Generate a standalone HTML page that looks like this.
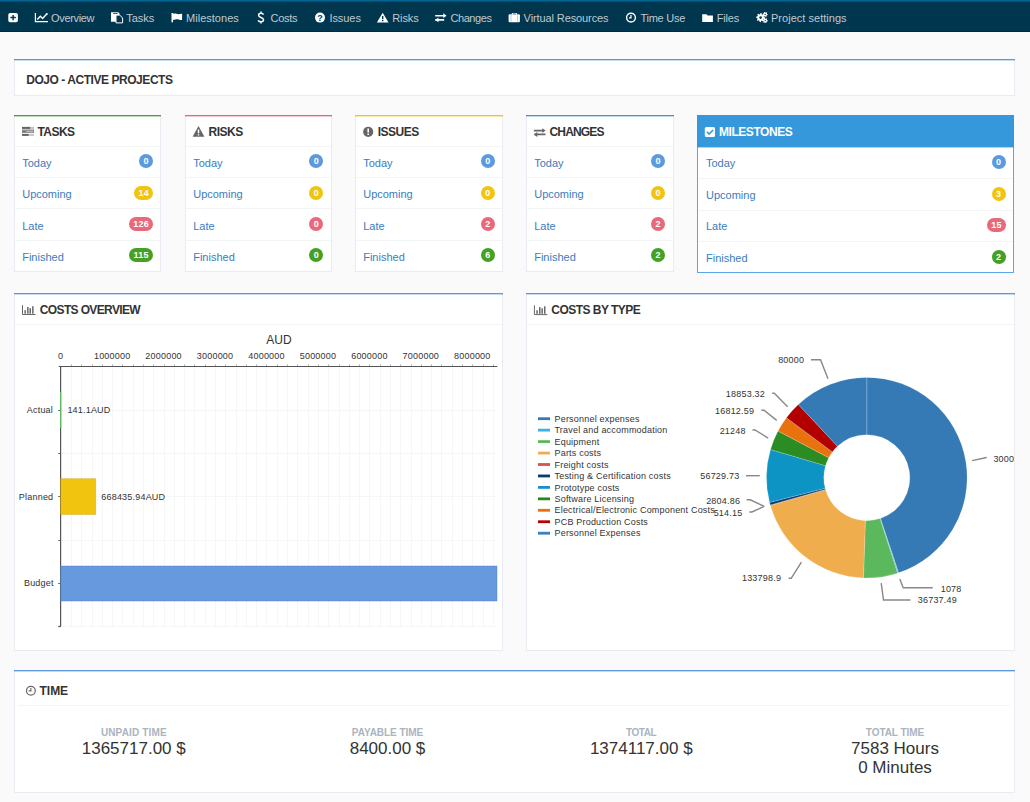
<!DOCTYPE html>
<html><head><meta charset="utf-8"><style>
html,body{margin:0;padding:0;}
body{width:1030px;height:802px;overflow:hidden;background:#fafafa;position:relative;font-family:"Liberation Sans",sans-serif;}
.t{position:absolute;white-space:pre;}
.c9{font-size:9px;fill:#333;letter-spacing:0.2px;}
svg text{font-family:"Liberation Sans",sans-serif;}
.badge{position:absolute;height:14px;border-radius:7px;color:#fff;font:bold 9px/14px "Liberation Sans",sans-serif;text-align:center;letter-spacing:0.3px;text-indent:0.3px;}
</style></head><body>
<div style="position:absolute;left:0px;top:0px;width:1030px;height:32px;background:#01364f"></div>
<div style="position:absolute;left:0px;top:0px;width:1030px;height:1px;background:#016596"></div>
<div style="position:absolute;left:0px;top:1px;width:1030px;height:1px;background:#024c70"></div>
<div style="position:absolute;left:0px;top:31px;width:1030px;height:1px;background:#022b3e"></div>
<div style="position:absolute;left:14px;top:59px;width:1001px;height:37px;background:#fff;box-sizing:border-box;border:1px solid #e8ecf2"></div>
<div style="position:absolute;left:14px;top:59px;width:1001px;height:1px;background:#5c96df"></div>
<div style="position:absolute;left:14px;top:60px;width:1001px;height:1px;background:#5c96df;opacity:0.35"></div>
<div style="position:absolute;left:14px;top:115px;width:147px;height:157px;background:#fff;box-sizing:border-box;border:1px solid #e8ecf2"></div>
<div style="position:absolute;left:14px;top:115px;width:147px;height:1px;background:#44a329"></div>
<div style="position:absolute;left:14px;top:116px;width:147px;height:1px;background:#44a329;opacity:0.35"></div>
<div style="position:absolute;left:15px;top:146px;width:145px;height:1px;background:#f3f4f5"></div>
<div style="position:absolute;left:15px;top:177.0px;width:145px;height:1px;background:#f3f4f5"></div>
<div style="position:absolute;left:15px;top:208.3px;width:145px;height:1px;background:#f3f4f5"></div>
<div style="position:absolute;left:15px;top:239.6px;width:145px;height:1px;background:#f3f4f5"></div>
<div class="badge" style="left:138.9px;top:154.4px;width:14px;background:#5b9ade">0</div>
<div class="badge" style="left:134.4px;top:185.7px;width:18.5px;background:#f1c40f">14</div>
<div class="badge" style="left:129.2px;top:217.0px;width:23.7px;background:#e8697a">126</div>
<div class="badge" style="left:129.2px;top:248.3px;width:23.7px;background:#45a125">115</div>
<div style="position:absolute;left:185px;top:115px;width:147px;height:157px;background:#fff;box-sizing:border-box;border:1px solid #e8ecf2"></div>
<div style="position:absolute;left:185px;top:115px;width:147px;height:1px;background:#e46672"></div>
<div style="position:absolute;left:185px;top:116px;width:147px;height:1px;background:#e46672;opacity:0.35"></div>
<div style="position:absolute;left:186px;top:146px;width:145px;height:1px;background:#f3f4f5"></div>
<div style="position:absolute;left:186px;top:177.0px;width:145px;height:1px;background:#f3f4f5"></div>
<div style="position:absolute;left:186px;top:208.3px;width:145px;height:1px;background:#f3f4f5"></div>
<div style="position:absolute;left:186px;top:239.6px;width:145px;height:1px;background:#f3f4f5"></div>
<div class="badge" style="left:309.3px;top:154.4px;width:14px;background:#5b9ade">0</div>
<div class="badge" style="left:309.3px;top:185.7px;width:14px;background:#f1c40f">0</div>
<div class="badge" style="left:309.3px;top:217.0px;width:14px;background:#e8697a">0</div>
<div class="badge" style="left:309.3px;top:248.3px;width:14px;background:#45a125">0</div>
<div style="position:absolute;left:355px;top:115px;width:148px;height:157px;background:#fff;box-sizing:border-box;border:1px solid #e8ecf2"></div>
<div style="position:absolute;left:355px;top:115px;width:148px;height:1px;background:#f1c40f"></div>
<div style="position:absolute;left:355px;top:116px;width:148px;height:1px;background:#f1c40f;opacity:0.35"></div>
<div style="position:absolute;left:356px;top:146px;width:146px;height:1px;background:#f3f4f5"></div>
<div style="position:absolute;left:356px;top:177.0px;width:146px;height:1px;background:#f3f4f5"></div>
<div style="position:absolute;left:356px;top:208.3px;width:146px;height:1px;background:#f3f4f5"></div>
<div style="position:absolute;left:356px;top:239.6px;width:146px;height:1px;background:#f3f4f5"></div>
<div class="badge" style="left:480.8px;top:154.4px;width:14px;background:#5b9ade">0</div>
<div class="badge" style="left:480.8px;top:185.7px;width:14px;background:#f1c40f">0</div>
<div class="badge" style="left:480.8px;top:217.0px;width:14px;background:#e8697a">2</div>
<div class="badge" style="left:480.8px;top:248.3px;width:14px;background:#45a125">6</div>
<div style="position:absolute;left:526px;top:115px;width:148px;height:157px;background:#fff;box-sizing:border-box;border:1px solid #e8ecf2"></div>
<div style="position:absolute;left:526px;top:115px;width:148px;height:1px;background:#4d8fdb"></div>
<div style="position:absolute;left:526px;top:116px;width:148px;height:1px;background:#4d8fdb;opacity:0.35"></div>
<div style="position:absolute;left:527px;top:146px;width:146px;height:1px;background:#f3f4f5"></div>
<div style="position:absolute;left:527px;top:177.0px;width:146px;height:1px;background:#f3f4f5"></div>
<div style="position:absolute;left:527px;top:208.3px;width:146px;height:1px;background:#f3f4f5"></div>
<div style="position:absolute;left:527px;top:239.6px;width:146px;height:1px;background:#f3f4f5"></div>
<div class="badge" style="left:651.0px;top:154.4px;width:14px;background:#5b9ade">0</div>
<div class="badge" style="left:651.0px;top:185.7px;width:14px;background:#f1c40f">0</div>
<div class="badge" style="left:651.0px;top:217.0px;width:14px;background:#e8697a">2</div>
<div class="badge" style="left:651.0px;top:248.3px;width:14px;background:#45a125">2</div>
<div style="position:absolute;left:697px;top:115px;width:317px;height:158px;background:#fff;box-sizing:border-box;border:1px solid #5aa6e6"></div>
<div style="position:absolute;left:697px;top:115px;width:317px;height:32px;background:#3498db"></div>
<div style="position:absolute;left:697px;top:147px;width:317px;height:1px;background:#3498db;opacity:0.4"></div>
<div style="position:absolute;left:698px;top:178.3px;width:315px;height:1px;background:#f3f4f5"></div>
<div style="position:absolute;left:698px;top:209.60000000000002px;width:315px;height:1px;background:#f3f4f5"></div>
<div style="position:absolute;left:698px;top:240.9px;width:315px;height:1px;background:#f3f4f5"></div>
<div class="badge" style="left:991.6px;top:155.3px;width:14px;background:#5b9ade">0</div>
<div class="badge" style="left:991.6px;top:186.7px;width:14px;background:#f1c40f">3</div>
<div class="badge" style="left:987.1px;top:218.1px;width:18.5px;background:#e8697a">15</div>
<div class="badge" style="left:991.6px;top:249.5px;width:14px;background:#45a125">2</div>
<div style="position:absolute;left:14px;top:293px;width:489px;height:358px;background:#fff;box-sizing:border-box;border:1px solid #e8ecf2"></div>
<div style="position:absolute;left:14px;top:293px;width:489px;height:1px;background:#5c96df"></div>
<div style="position:absolute;left:14px;top:294px;width:489px;height:1px;background:#5c96df;opacity:0.35"></div>
<div style="position:absolute;left:15px;top:324px;width:487px;height:1px;background:#f3f4f5"></div>
<div style="position:absolute;left:526px;top:293px;width:489px;height:358px;background:#fff;box-sizing:border-box;border:1px solid #e8ecf2"></div>
<div style="position:absolute;left:526px;top:293px;width:489px;height:1px;background:#5c96df"></div>
<div style="position:absolute;left:526px;top:294px;width:489px;height:1px;background:#5c96df;opacity:0.35"></div>
<div style="position:absolute;left:527px;top:324px;width:487px;height:1px;background:#f3f4f5"></div>
<div style="position:absolute;left:14px;top:670px;width:1001px;height:123px;background:#fff;box-sizing:border-box;border:1px solid #e8ecf2"></div>
<div style="position:absolute;left:14px;top:670px;width:1001px;height:1px;background:#5c96df"></div>
<div style="position:absolute;left:14px;top:671px;width:1001px;height:1px;background:#5c96df;opacity:0.35"></div>
<div style="position:absolute;left:18px;top:705px;width:992px;height:1px;background:#f3f4f5"></div>
<div class="t" style="left:51.00px;top:12.76px;font-size:11px;line-height:11px;font-weight:normal;color:#bfcad2;letter-spacing:-0.335px;">Overview</div>
<div class="t" style="left:126.30px;top:12.76px;font-size:11px;line-height:11px;font-weight:normal;color:#bfcad2;letter-spacing:-0.031px;">Tasks</div>
<div class="t" style="left:186.00px;top:12.76px;font-size:11px;line-height:11px;font-weight:normal;color:#bfcad2;letter-spacing:0.025px;">Milestones</div>
<div class="t" style="left:270.60px;top:12.76px;font-size:11px;line-height:11px;font-weight:normal;color:#bfcad2;letter-spacing:-0.281px;">Costs</div>
<div class="t" style="left:329.40px;top:12.76px;font-size:11px;line-height:11px;font-weight:normal;color:#bfcad2;letter-spacing:-0.059px;">Issues</div>
<div class="t" style="left:392.30px;top:12.76px;font-size:11px;line-height:11px;font-weight:normal;color:#bfcad2;letter-spacing:-0.123px;">Risks</div>
<div class="t" style="left:450.40px;top:12.76px;font-size:11px;line-height:11px;font-weight:normal;color:#bfcad2;letter-spacing:-0.408px;">Changes</div>
<div class="t" style="left:523.60px;top:12.76px;font-size:11px;line-height:11px;font-weight:normal;color:#bfcad2;letter-spacing:-0.102px;">Virtual Resources</div>
<div class="t" style="left:640.50px;top:12.76px;font-size:11px;line-height:11px;font-weight:normal;color:#bfcad2;letter-spacing:-0.265px;">Time Use</div>
<div class="t" style="left:716.70px;top:12.76px;font-size:11px;line-height:11px;font-weight:normal;color:#bfcad2;letter-spacing:-0.159px;">Files</div>
<div class="t" style="left:771.00px;top:12.76px;font-size:11px;line-height:11px;font-weight:normal;color:#bfcad2;letter-spacing:0.026px;">Project settings</div>
<div class="t" style="left:26.20px;top:74.03px;font-size:12px;line-height:12px;font-weight:bold;color:#333;letter-spacing:-0.450px;">DOJO - ACTIVE PROJECTS</div>
<div class="t" style="left:37.50px;top:126.03px;font-size:12px;line-height:12px;font-weight:bold;color:#333;letter-spacing:-0.570px;">TASKS</div>
<div class="t" style="left:22.20px;top:157.86px;font-size:11px;line-height:11px;font-weight:normal;color:#3a7cc0;letter-spacing:0.000px;">Today</div>
<div class="t" style="left:22.20px;top:188.86px;font-size:11px;line-height:11px;font-weight:normal;color:#3a7cc0;letter-spacing:0.000px;">Upcoming</div>
<div class="t" style="left:22.20px;top:220.76px;font-size:11px;line-height:11px;font-weight:normal;color:#3a7cc0;letter-spacing:0.000px;">Late</div>
<div class="t" style="left:22.20px;top:251.86px;font-size:11px;line-height:11px;font-weight:normal;color:#3a7cc0;letter-spacing:0.000px;">Finished</div>
<div class="t" style="left:208.50px;top:126.03px;font-size:12px;line-height:12px;font-weight:bold;color:#333;letter-spacing:-0.497px;">RISKS</div>
<div class="t" style="left:193.20px;top:157.86px;font-size:11px;line-height:11px;font-weight:normal;color:#3a7cc0;letter-spacing:0.000px;">Today</div>
<div class="t" style="left:193.20px;top:188.86px;font-size:11px;line-height:11px;font-weight:normal;color:#3a7cc0;letter-spacing:0.000px;">Upcoming</div>
<div class="t" style="left:193.20px;top:220.76px;font-size:11px;line-height:11px;font-weight:normal;color:#3a7cc0;letter-spacing:0.000px;">Late</div>
<div class="t" style="left:193.20px;top:251.86px;font-size:11px;line-height:11px;font-weight:normal;color:#3a7cc0;letter-spacing:0.000px;">Finished</div>
<div class="t" style="left:377.70px;top:126.03px;font-size:12px;line-height:12px;font-weight:bold;color:#333;letter-spacing:-0.503px;">ISSUES</div>
<div class="t" style="left:363.20px;top:157.86px;font-size:11px;line-height:11px;font-weight:normal;color:#3a7cc0;letter-spacing:0.000px;">Today</div>
<div class="t" style="left:363.20px;top:188.86px;font-size:11px;line-height:11px;font-weight:normal;color:#3a7cc0;letter-spacing:0.000px;">Upcoming</div>
<div class="t" style="left:363.20px;top:220.76px;font-size:11px;line-height:11px;font-weight:normal;color:#3a7cc0;letter-spacing:0.000px;">Late</div>
<div class="t" style="left:363.20px;top:251.86px;font-size:11px;line-height:11px;font-weight:normal;color:#3a7cc0;letter-spacing:0.000px;">Finished</div>
<div class="t" style="left:549.50px;top:126.03px;font-size:12px;line-height:12px;font-weight:bold;color:#333;letter-spacing:-0.836px;">CHANGES</div>
<div class="t" style="left:534.20px;top:157.86px;font-size:11px;line-height:11px;font-weight:normal;color:#3a7cc0;letter-spacing:0.000px;">Today</div>
<div class="t" style="left:534.20px;top:188.86px;font-size:11px;line-height:11px;font-weight:normal;color:#3a7cc0;letter-spacing:0.000px;">Upcoming</div>
<div class="t" style="left:534.20px;top:220.76px;font-size:11px;line-height:11px;font-weight:normal;color:#3a7cc0;letter-spacing:0.000px;">Late</div>
<div class="t" style="left:534.20px;top:251.86px;font-size:11px;line-height:11px;font-weight:normal;color:#3a7cc0;letter-spacing:0.000px;">Finished</div>
<div class="t" style="left:719.00px;top:126.23px;font-size:12px;line-height:12px;font-weight:bold;color:#fff;letter-spacing:-0.455px;">MILESTONES</div>
<div class="t" style="left:706.00px;top:158.46px;font-size:11px;line-height:11px;font-weight:normal;color:#3a7cc0;letter-spacing:0.000px;">Today</div>
<div class="t" style="left:706.00px;top:189.86px;font-size:11px;line-height:11px;font-weight:normal;color:#3a7cc0;letter-spacing:0.000px;">Upcoming</div>
<div class="t" style="left:706.00px;top:221.26px;font-size:11px;line-height:11px;font-weight:normal;color:#3a7cc0;letter-spacing:0.000px;">Late</div>
<div class="t" style="left:706.00px;top:252.66px;font-size:11px;line-height:11px;font-weight:normal;color:#3a7cc0;letter-spacing:0.000px;">Finished</div>
<div class="t" style="left:39.80px;top:303.83px;font-size:12px;line-height:12px;font-weight:bold;color:#333;letter-spacing:-0.634px;">COSTS OVERVIEW</div>
<div class="t" style="left:551.30px;top:303.83px;font-size:12px;line-height:12px;font-weight:bold;color:#333;letter-spacing:-0.526px;">COSTS BY TYPE</div>
<div class="t" style="left:39.60px;top:684.83px;font-size:12px;line-height:12px;font-weight:bold;color:#333;letter-spacing:-0.057px;">TIME</div>
<div class="t" style="left:100.90px;top:727.90px;font-size:10px;line-height:10px;font-weight:bold;color:#aab4bf;letter-spacing:0.143px;">UNPAID TIME</div>
<div class="t" style="left:81.75px;top:740.18px;font-size:17px;line-height:17px;font-weight:normal;color:#333;letter-spacing:0.000px;">1365717.00 $</div>
<div class="t" style="left:351.85px;top:727.90px;font-size:10px;line-height:10px;font-weight:bold;color:#aab4bf;letter-spacing:-0.052px;">PAYABLE TIME</div>
<div class="t" style="left:349.68px;top:740.18px;font-size:17px;line-height:17px;font-weight:normal;color:#333;letter-spacing:0.000px;">8400.00 $</div>
<div class="t" style="left:625.90px;top:727.90px;font-size:10px;line-height:10px;font-weight:bold;color:#aab4bf;letter-spacing:-0.427px;">TOTAL</div>
<div class="t" style="left:589.88px;top:740.18px;font-size:17px;line-height:17px;font-weight:normal;color:#333;letter-spacing:0.000px;">1374117.00 $</div>
<div class="t" style="left:865.85px;top:727.90px;font-size:10px;line-height:10px;font-weight:bold;color:#aab4bf;letter-spacing:-0.066px;">TOTAL TIME</div>
<div class="t" style="left:851.05px;top:740.18px;font-size:17px;line-height:17px;font-weight:normal;color:#333;letter-spacing:0.000px;">7583 Hours</div>
<div class="t" style="left:858.15px;top:758.58px;font-size:17px;line-height:17px;font-weight:normal;color:#333;letter-spacing:0.000px;">0 Minutes</div>
<svg style="position:absolute;left:0;top:0" width="1030" height="802" viewBox="0 0 1030 802"><line x1="71.50" y1="366.5" x2="71.50" y2="626.5" stroke="#f6f6f6" stroke-width="1"/><line x1="71.50" y1="364.5" x2="71.50" y2="366.5" stroke="#aaa" stroke-width="1"/><line x1="81.50" y1="366.5" x2="81.50" y2="626.5" stroke="#f6f6f6" stroke-width="1"/><line x1="81.50" y1="364.5" x2="81.50" y2="366.5" stroke="#aaa" stroke-width="1"/><line x1="92.50" y1="366.5" x2="92.50" y2="626.5" stroke="#f6f6f6" stroke-width="1"/><line x1="92.50" y1="364.5" x2="92.50" y2="366.5" stroke="#aaa" stroke-width="1"/><line x1="102.50" y1="366.5" x2="102.50" y2="626.5" stroke="#f6f6f6" stroke-width="1"/><line x1="102.50" y1="364.5" x2="102.50" y2="366.5" stroke="#aaa" stroke-width="1"/><line x1="112.50" y1="366.5" x2="112.50" y2="626.5" stroke="#f6f6f6" stroke-width="1"/><line x1="112.50" y1="364.5" x2="112.50" y2="366.5" stroke="#aaa" stroke-width="1"/><line x1="122.50" y1="366.5" x2="122.50" y2="626.5" stroke="#f6f6f6" stroke-width="1"/><line x1="122.50" y1="364.5" x2="122.50" y2="366.5" stroke="#aaa" stroke-width="1"/><line x1="133.50" y1="366.5" x2="133.50" y2="626.5" stroke="#f6f6f6" stroke-width="1"/><line x1="133.50" y1="364.5" x2="133.50" y2="366.5" stroke="#aaa" stroke-width="1"/><line x1="143.50" y1="366.5" x2="143.50" y2="626.5" stroke="#f6f6f6" stroke-width="1"/><line x1="143.50" y1="364.5" x2="143.50" y2="366.5" stroke="#aaa" stroke-width="1"/><line x1="153.50" y1="366.5" x2="153.50" y2="626.5" stroke="#f6f6f6" stroke-width="1"/><line x1="153.50" y1="364.5" x2="153.50" y2="366.5" stroke="#aaa" stroke-width="1"/><line x1="164.50" y1="366.5" x2="164.50" y2="626.5" stroke="#f6f6f6" stroke-width="1"/><line x1="164.50" y1="364.5" x2="164.50" y2="366.5" stroke="#aaa" stroke-width="1"/><line x1="174.50" y1="366.5" x2="174.50" y2="626.5" stroke="#f6f6f6" stroke-width="1"/><line x1="174.50" y1="364.5" x2="174.50" y2="366.5" stroke="#aaa" stroke-width="1"/><line x1="184.50" y1="366.5" x2="184.50" y2="626.5" stroke="#f6f6f6" stroke-width="1"/><line x1="184.50" y1="364.5" x2="184.50" y2="366.5" stroke="#aaa" stroke-width="1"/><line x1="194.50" y1="366.5" x2="194.50" y2="626.5" stroke="#f6f6f6" stroke-width="1"/><line x1="194.50" y1="364.5" x2="194.50" y2="366.5" stroke="#aaa" stroke-width="1"/><line x1="205.50" y1="366.5" x2="205.50" y2="626.5" stroke="#f6f6f6" stroke-width="1"/><line x1="205.50" y1="364.5" x2="205.50" y2="366.5" stroke="#aaa" stroke-width="1"/><line x1="215.50" y1="366.5" x2="215.50" y2="626.5" stroke="#f6f6f6" stroke-width="1"/><line x1="215.50" y1="364.5" x2="215.50" y2="366.5" stroke="#aaa" stroke-width="1"/><line x1="225.50" y1="366.5" x2="225.50" y2="626.5" stroke="#f6f6f6" stroke-width="1"/><line x1="225.50" y1="364.5" x2="225.50" y2="366.5" stroke="#aaa" stroke-width="1"/><line x1="236.50" y1="366.5" x2="236.50" y2="626.5" stroke="#f6f6f6" stroke-width="1"/><line x1="236.50" y1="364.5" x2="236.50" y2="366.5" stroke="#aaa" stroke-width="1"/><line x1="246.50" y1="366.5" x2="246.50" y2="626.5" stroke="#f6f6f6" stroke-width="1"/><line x1="246.50" y1="364.5" x2="246.50" y2="366.5" stroke="#aaa" stroke-width="1"/><line x1="256.50" y1="366.5" x2="256.50" y2="626.5" stroke="#f6f6f6" stroke-width="1"/><line x1="256.50" y1="364.5" x2="256.50" y2="366.5" stroke="#aaa" stroke-width="1"/><line x1="266.50" y1="366.5" x2="266.50" y2="626.5" stroke="#f6f6f6" stroke-width="1"/><line x1="266.50" y1="364.5" x2="266.50" y2="366.5" stroke="#aaa" stroke-width="1"/><line x1="277.50" y1="366.5" x2="277.50" y2="626.5" stroke="#f6f6f6" stroke-width="1"/><line x1="277.50" y1="364.5" x2="277.50" y2="366.5" stroke="#aaa" stroke-width="1"/><line x1="287.50" y1="366.5" x2="287.50" y2="626.5" stroke="#f6f6f6" stroke-width="1"/><line x1="287.50" y1="364.5" x2="287.50" y2="366.5" stroke="#aaa" stroke-width="1"/><line x1="297.50" y1="366.5" x2="297.50" y2="626.5" stroke="#f6f6f6" stroke-width="1"/><line x1="297.50" y1="364.5" x2="297.50" y2="366.5" stroke="#aaa" stroke-width="1"/><line x1="308.50" y1="366.5" x2="308.50" y2="626.5" stroke="#f6f6f6" stroke-width="1"/><line x1="308.50" y1="364.5" x2="308.50" y2="366.5" stroke="#aaa" stroke-width="1"/><line x1="318.50" y1="366.5" x2="318.50" y2="626.5" stroke="#f6f6f6" stroke-width="1"/><line x1="318.50" y1="364.5" x2="318.50" y2="366.5" stroke="#aaa" stroke-width="1"/><line x1="328.50" y1="366.5" x2="328.50" y2="626.5" stroke="#f6f6f6" stroke-width="1"/><line x1="328.50" y1="364.5" x2="328.50" y2="366.5" stroke="#aaa" stroke-width="1"/><line x1="339.50" y1="366.5" x2="339.50" y2="626.5" stroke="#f6f6f6" stroke-width="1"/><line x1="339.50" y1="364.5" x2="339.50" y2="366.5" stroke="#aaa" stroke-width="1"/><line x1="349.50" y1="366.5" x2="349.50" y2="626.5" stroke="#f6f6f6" stroke-width="1"/><line x1="349.50" y1="364.5" x2="349.50" y2="366.5" stroke="#aaa" stroke-width="1"/><line x1="359.50" y1="366.5" x2="359.50" y2="626.5" stroke="#f6f6f6" stroke-width="1"/><line x1="359.50" y1="364.5" x2="359.50" y2="366.5" stroke="#aaa" stroke-width="1"/><line x1="369.50" y1="366.5" x2="369.50" y2="626.5" stroke="#f6f6f6" stroke-width="1"/><line x1="369.50" y1="364.5" x2="369.50" y2="366.5" stroke="#aaa" stroke-width="1"/><line x1="380.50" y1="366.5" x2="380.50" y2="626.5" stroke="#f6f6f6" stroke-width="1"/><line x1="380.50" y1="364.5" x2="380.50" y2="366.5" stroke="#aaa" stroke-width="1"/><line x1="390.50" y1="366.5" x2="390.50" y2="626.5" stroke="#f6f6f6" stroke-width="1"/><line x1="390.50" y1="364.5" x2="390.50" y2="366.5" stroke="#aaa" stroke-width="1"/><line x1="400.50" y1="366.5" x2="400.50" y2="626.5" stroke="#f6f6f6" stroke-width="1"/><line x1="400.50" y1="364.5" x2="400.50" y2="366.5" stroke="#aaa" stroke-width="1"/><line x1="411.50" y1="366.5" x2="411.50" y2="626.5" stroke="#f6f6f6" stroke-width="1"/><line x1="411.50" y1="364.5" x2="411.50" y2="366.5" stroke="#aaa" stroke-width="1"/><line x1="421.50" y1="366.5" x2="421.50" y2="626.5" stroke="#f6f6f6" stroke-width="1"/><line x1="421.50" y1="364.5" x2="421.50" y2="366.5" stroke="#aaa" stroke-width="1"/><line x1="431.50" y1="366.5" x2="431.50" y2="626.5" stroke="#f6f6f6" stroke-width="1"/><line x1="431.50" y1="364.5" x2="431.50" y2="366.5" stroke="#aaa" stroke-width="1"/><line x1="441.50" y1="366.5" x2="441.50" y2="626.5" stroke="#f6f6f6" stroke-width="1"/><line x1="441.50" y1="364.5" x2="441.50" y2="366.5" stroke="#aaa" stroke-width="1"/><line x1="452.50" y1="366.5" x2="452.50" y2="626.5" stroke="#f6f6f6" stroke-width="1"/><line x1="452.50" y1="364.5" x2="452.50" y2="366.5" stroke="#aaa" stroke-width="1"/><line x1="462.50" y1="366.5" x2="462.50" y2="626.5" stroke="#f6f6f6" stroke-width="1"/><line x1="462.50" y1="364.5" x2="462.50" y2="366.5" stroke="#aaa" stroke-width="1"/><line x1="472.50" y1="366.5" x2="472.50" y2="626.5" stroke="#f6f6f6" stroke-width="1"/><line x1="472.50" y1="364.5" x2="472.50" y2="366.5" stroke="#aaa" stroke-width="1"/><line x1="483.50" y1="366.5" x2="483.50" y2="626.5" stroke="#f6f6f6" stroke-width="1"/><line x1="483.50" y1="364.5" x2="483.50" y2="366.5" stroke="#aaa" stroke-width="1"/><line x1="493.50" y1="366.5" x2="493.50" y2="626.5" stroke="#f6f6f6" stroke-width="1"/><line x1="493.50" y1="364.5" x2="493.50" y2="366.5" stroke="#aaa" stroke-width="1"/><line x1="60.7" y1="410.50" x2="497.3" y2="410.50" stroke="#f6f6f6" stroke-width="1"/><line x1="58.2" y1="410.50" x2="60.7" y2="410.50" stroke="#666" stroke-width="1"/><line x1="60.7" y1="453.50" x2="497.3" y2="453.50" stroke="#f6f6f6" stroke-width="1"/><line x1="58.2" y1="453.50" x2="60.7" y2="453.50" stroke="#666" stroke-width="1"/><line x1="60.7" y1="496.50" x2="497.3" y2="496.50" stroke="#f6f6f6" stroke-width="1"/><line x1="58.2" y1="496.50" x2="60.7" y2="496.50" stroke="#666" stroke-width="1"/><line x1="60.7" y1="540.50" x2="497.3" y2="540.50" stroke="#f6f6f6" stroke-width="1"/><line x1="58.2" y1="540.50" x2="60.7" y2="540.50" stroke="#666" stroke-width="1"/><line x1="60.7" y1="583.50" x2="497.3" y2="583.50" stroke="#f6f6f6" stroke-width="1"/><line x1="58.2" y1="583.50" x2="60.7" y2="583.50" stroke="#666" stroke-width="1"/><line x1="60.7" y1="626.5" x2="497.3" y2="626.5" stroke="#f6f6f6" stroke-width="1"/><line x1="58.7" y1="366.5" x2="497.3" y2="366.5" stroke="#555" stroke-width="1.2"/><line x1="60.6" y1="366.5" x2="60.6" y2="626.5" stroke="#555" stroke-width="1.2"/><line x1="58.2" y1="626.5" x2="60.7" y2="626.5" stroke="#555" stroke-width="1.2"/><rect x="60" y="392" width="1.2" height="36" fill="#5cb85c"/><rect x="60.7" y="478.7" width="35" height="35.8" fill="#f1c40f" stroke="#c9a20a" stroke-opacity="0.5" stroke-width="0.8"/><rect x="60.7" y="566" width="436.30" height="35" fill="#6699dd" stroke="#4a7bbf" stroke-opacity="0.5" stroke-width="0.8"/><text x="60.70" y="359.3" text-anchor="middle" class="c9">0</text><text x="112.15" y="359.3" text-anchor="middle" class="c9">1000000</text><text x="163.60" y="359.3" text-anchor="middle" class="c9">2000000</text><text x="215.05" y="359.3" text-anchor="middle" class="c9">3000000</text><text x="266.50" y="359.3" text-anchor="middle" class="c9">4000000</text><text x="317.95" y="359.3" text-anchor="middle" class="c9">5000000</text><text x="369.40" y="359.3" text-anchor="middle" class="c9">6000000</text><text x="420.85" y="359.3" text-anchor="middle" class="c9">7000000</text><text x="472.30" y="359.3" text-anchor="middle" class="c9">8000000</text><text x="279" y="343.8" text-anchor="middle" style="font-size:12px" fill="#333">AUD</text><text x="53" y="413" text-anchor="end" class="c9">Actual</text><text x="53.3" y="500" text-anchor="end" class="c9">Planned</text><text x="53.7" y="586" text-anchor="end" class="c9">Budget</text><text x="67.4" y="413" class="c9">141.1AUD</text><text x="101.3" y="500" class="c9">668435.94AUD</text><path d="M866.80 377.40A100.3 100.3 0 0 1 898.56 572.84L880.42 518.49A43 43 0 0 0 866.80 434.70Z" fill="#3579b5" stroke="#fff" stroke-opacity="0.3" stroke-width="0.6"/><path d="M898.56 572.84A100.3 100.3 0 0 1 897.60 573.15L880.00 518.62A43 43 0 0 0 880.42 518.49Z" fill="#5bc0de" stroke="#fff" stroke-opacity="0.3" stroke-width="0.6"/><path d="M897.60 573.15A100.3 100.3 0 0 1 863.48 577.94L865.37 520.68A43 43 0 0 0 880.00 518.62Z" fill="#5cb85c" stroke="#fff" stroke-opacity="0.3" stroke-width="0.6"/><path d="M863.48 577.94A100.3 100.3 0 0 1 770.41 505.44L825.48 489.59A43 43 0 0 0 865.37 520.68Z" fill="#f0ad4e" stroke="#fff" stroke-opacity="0.3" stroke-width="0.6"/><path d="M770.41 505.44A100.3 100.3 0 0 1 770.28 504.97L825.42 489.39A43 43 0 0 0 825.48 489.59Z" fill="#d9534f" stroke="#fff" stroke-opacity="0.3" stroke-width="0.6"/><path d="M770.28 504.97A100.3 100.3 0 0 1 769.59 502.42L825.13 488.30A43 43 0 0 0 825.42 489.39Z" fill="#0b3c6a" stroke="#fff" stroke-opacity="0.3" stroke-width="0.6"/><path d="M769.59 502.42A100.3 100.3 0 0 1 770.52 449.59L825.52 465.65A43 43 0 0 0 825.13 488.30Z" fill="#0d94c4" stroke="#fff" stroke-opacity="0.3" stroke-width="0.6"/><path d="M770.52 449.59A100.3 100.3 0 0 1 778.01 431.05L828.73 457.70A43 43 0 0 0 825.52 465.65Z" fill="#2c8c24" stroke="#fff" stroke-opacity="0.3" stroke-width="0.6"/><path d="M778.01 431.05A100.3 100.3 0 0 1 786.46 417.66L832.36 451.96A43 43 0 0 0 828.73 457.70Z" fill="#e8730e" stroke="#fff" stroke-opacity="0.3" stroke-width="0.6"/><path d="M786.46 417.66A100.3 100.3 0 0 1 798.30 404.44L837.43 446.29A43 43 0 0 0 832.36 451.96Z" fill="#b20000" stroke="#fff" stroke-opacity="0.3" stroke-width="0.6"/><path d="M798.30 404.44A100.3 100.3 0 0 1 866.80 377.40L866.80 434.70A43 43 0 0 0 837.43 446.29Z" fill="#3579b5" stroke="#fff" stroke-opacity="0.3" stroke-width="0.6"/><polyline points="811.0,359.7 820.5,359.7 828.0,378.7" fill="none" stroke="#888" stroke-width="1.4"/><text x="804.2" y="363.3" text-anchor="end" class="c9">80000</text><polyline points="772.2,393.3 774.3,393.3 787.6,406.8" fill="none" stroke="#888" stroke-width="1.4"/><text x="765" y="397.3" text-anchor="end" class="c9">18853.32</text><polyline points="761.4,410.2 764.0,410.2 776.7,420.4" fill="none" stroke="#888" stroke-width="1.4"/><text x="754.2" y="414.3" text-anchor="end" class="c9">16812.59</text><polyline points="752.5,430.0 755.0,430.0 768.2,438.1" fill="none" stroke="#888" stroke-width="1.4"/><text x="745.7" y="434" text-anchor="end" class="c9">21248</text><polyline points="745.9,475.7 759.8,475.7" fill="none" stroke="#888" stroke-width="1.4"/><text x="739.4" y="479.2" text-anchor="end" class="c9">56729.73</text><polyline points="746.7,499.8 750.2,499.8 764.2,506.3" fill="none" stroke="#888" stroke-width="1.4"/><text x="740.1" y="503.6" text-anchor="end" class="c9">2804.86</text><polyline points="749.3,512.0 752.0,512.0 764.2,506.3" fill="none" stroke="#888" stroke-width="1.4"/><text x="742.4" y="515.5" text-anchor="end" class="c9">514.15</text><polyline points="788.6,578.3 791.2,578.3 801.4,562.1" fill="none" stroke="#888" stroke-width="1.4"/><text x="781.1" y="581.3" text-anchor="end" class="c9">133798.9</text><polyline points="972.1,460.6 986.7,457.5" fill="none" stroke="#888" stroke-width="1.4"/><clipPath id="cp"><rect x="527" y="325" width="487" height="325"/></clipPath><text x="993.4" y="461.8" class="c9" clip-path="url(#cp)">300000</text><polyline points="899.8,579.1 903.2,587.7 932.8,587.7" fill="none" stroke="#888" stroke-width="1.4"/><text x="940.7" y="591.5" class="c9">1078</text><polyline points="881.2,583.2 883.5,600.0 910.4,600.0" fill="none" stroke="#888" stroke-width="1.4"/><text x="917.8" y="603.4" class="c9">36737.49</text><rect x="538" y="417.30" width="12" height="2.8" fill="#3579b5"/><text x="554.5" y="421.80" class="c9">Personnel expenses</text><rect x="538" y="428.75" width="12" height="2.8" fill="#3bb4e5"/><text x="554.5" y="433.25" class="c9">Travel and accommodation</text><rect x="538" y="440.20" width="12" height="2.8" fill="#5cb85c"/><text x="554.5" y="444.70" class="c9">Equipment</text><rect x="538" y="451.65" width="12" height="2.8" fill="#f0ad4e"/><text x="554.5" y="456.15" class="c9">Parts costs</text><rect x="538" y="463.10" width="12" height="2.8" fill="#d9534f"/><text x="554.5" y="467.60" class="c9">Freight costs</text><rect x="538" y="474.55" width="12" height="2.8" fill="#0b3c6a"/><text x="554.5" y="479.05" class="c9">Testing &amp; Certification costs</text><rect x="538" y="486.00" width="12" height="2.8" fill="#1a8fd0"/><text x="554.5" y="490.50" class="c9">Prototype costs</text><rect x="538" y="497.45" width="12" height="2.8" fill="#228b22"/><text x="554.5" y="501.95" class="c9">Software Licensing</text><rect x="538" y="508.90" width="12" height="2.8" fill="#e8730e"/><text x="554.5" y="513.40" class="c9">Electrical/Electronic Component Costs</text><rect x="538" y="520.35" width="12" height="2.8" fill="#b20000"/><text x="554.5" y="524.85" class="c9">PCB Production Costs</text><rect x="538" y="531.80" width="12" height="2.8" fill="#3a80c0"/><text x="554.5" y="536.30" class="c9">Personnel Expenses</text><rect x="8.3" y="12.9" width="9.6" height="9.4" rx="1.8" fill="#fff"/><path d="M13.1 14.9v5.4M10.4 17.6h5.4" stroke="#03364e" stroke-width="1.5"/><path d="M35.4 13v8.6h12.6" fill="none" stroke="#fff" stroke-width="1.2"/><path d="M37.2 19.6l3.2-3.4 2.2 2.2 3.9-4.2" fill="none" stroke="#fff" stroke-width="1.4"/><circle cx="46.8" cy="14" r="1" fill="#fff"/><path d="M111 12.2h7.2l1.2 1.2v8.3h-8.4z" fill="#fff"/><rect x="113.2" y="13.2" width="4.4" height="0.8" fill="#03364e"/><path d="M116 15.1h3.8l2.8 2.9v4.9h-6.6z" fill="#03364e" stroke="#fff" stroke-width="1"/><rect x="171.5" y="13" width="1.5" height="9.3" fill="#fff"/><path d="M173 13.8c2.5-1 4.5 1 6.5 0.2l2.6-0.2v6.1c-2.3 0.4-4.2-1.4-6.6-0.4l-2.5 0.6z" fill="#fff"/><path d="M263.5 14.7C263 13.7 262.1 13.3 261 13.3C259.6 13.3 258.6 14.1 258.6 15.3C258.6 16.7 259.8 17.1 261 17.5C262.3 17.9 263.5 18.4 263.5 19.8C263.5 21.1 262.4 21.8 261 21.8C259.8 21.8 258.7 21.3 258.1 20.3M261 11.4v2.2M261 21.4v2" fill="none" stroke="#fff" stroke-width="1.5"/><circle cx="320" cy="17.6" r="5" fill="#fff"/><text x="320" y="21.2" text-anchor="middle" style="font-size:9px;font-weight:bold" fill="#03364e">?</text><path d="M382.7 12.8l5.8 9.6h-11.6z" fill="#fff"/><path d="M382.7 16v3.2M382.7 20.1v1.1" stroke="#03364e" stroke-width="1.4"/><path d="M435.2 15.7h8.8M435.2 19.9h9" stroke="#fff" stroke-width="1.6"/><path d="M443.3 13.3l3.3 2.4-3.3 2.4z M438.5 17.5l-3.3 2.4 3.3 2.4z" fill="#fff"/><rect x="508.6" y="14.3" width="11.3" height="7.9" rx="1" fill="#fff"/><rect x="511.8" y="12.9" width="5.3" height="1.8" rx="0.4" fill="#fff"/><rect x="512.7" y="13.6" width="3.5" height="0.7" fill="#01364f"/><path d="M511 14.6v7.4M517.6 14.6v7.4" stroke="#01364f" stroke-width="0.5" stroke-opacity="0.5"/><circle cx="631" cy="17.6" r="4.4" fill="none" stroke="#fff" stroke-width="1.4"/><path d="M631 15v2.8h-2" fill="none" stroke="#fff" stroke-width="1.2"/><path d="M702.2 14.2h4.2l1.2 1.2h5.3v6.6h-10.7z" fill="#fff"/><path d="M765.20 17.60 L765.11 18.50 L763.66 18.87 L763.35 19.44 L763.85 20.85 L763.16 21.42 L761.87 20.66 L761.25 20.85 L760.60 22.20 L759.70 22.11 L759.33 20.66 L758.76 20.35 L757.35 20.85 L756.78 20.16 L757.54 18.87 L757.35 18.25 L756.00 17.60 L756.09 16.70 L757.54 16.33 L757.85 15.76 L757.35 14.35 L758.04 13.78 L759.33 14.54 L759.95 14.35 L760.60 13.00 L761.50 13.09 L761.87 14.54 L762.44 14.85 L763.85 14.35 L764.42 15.04 L763.66 16.33 L763.85 16.95Z" fill="#fff"/><circle cx="760.6" cy="17.6" r="1.3" fill="#03364e"/><path d="M767.80 14.40 L767.71 15.07 L766.82 15.34 L766.52 15.72 L766.50 16.65 L765.87 16.91 L765.20 16.27 L764.72 16.21 L763.90 16.65 L763.36 16.24 L763.58 15.34 L763.39 14.88 L762.60 14.40 L762.69 13.73 L763.58 13.46 L763.88 13.08 L763.90 12.15 L764.53 11.89 L765.20 12.53 L765.68 12.59 L766.50 12.15 L767.04 12.56 L766.82 13.46 L767.01 13.92Z" fill="#fff"/><circle cx="765.2" cy="14.4" r="0.7" fill="#03364e"/><path d="M767.80 20.60 L767.71 21.27 L766.82 21.54 L766.52 21.92 L766.50 22.85 L765.87 23.11 L765.20 22.47 L764.72 22.41 L763.90 22.85 L763.36 22.44 L763.58 21.54 L763.39 21.08 L762.60 20.60 L762.69 19.93 L763.58 19.66 L763.88 19.28 L763.90 18.35 L764.53 18.09 L765.20 18.73 L765.68 18.79 L766.50 18.35 L767.04 18.76 L766.82 19.66 L767.01 20.12Z" fill="#fff"/><circle cx="765.2" cy="20.6" r="0.7" fill="#03364e"/><rect x="22" y="126.9" width="12" height="2" fill="#c4c4c4"/><rect x="22" y="126.9" width="8.2" height="2" fill="#666"/><rect x="22" y="129.2" width="12" height="3.5" fill="#b4b4b4"/><rect x="22" y="130.4" width="12" height="2.3" fill="#777"/><rect x="26.2" y="130.9" width="7" height="1.2" fill="#bbb"/><rect x="22" y="133.9" width="12" height="2" fill="#c4c4c4"/><rect x="22" y="133.9" width="6.6" height="2" fill="#666"/><path d="M198.5 126.1l5.9 10.6h-11.8z" fill="#666"/><path d="M198.5 129.5v3.8M198.5 134.2v1.3" stroke="#fff" stroke-width="1.5"/><circle cx="368.2" cy="131.8" r="5.1" fill="#666"/><path d="M368.2 128.6v3.9M368.2 133.6v1.3" stroke="#fff" stroke-width="1.6"/><path d="M533.9 130.6h9.5M534.6 134.4h10.9" stroke="#666" stroke-width="1.7"/><path d="M542.4 128.2l3.2 2.4-3.2 2.4z M537.3 131.9l-3.5 2.5 3.5 2.5z" fill="#666"/><rect x="704.8" y="127" width="10.2" height="10" rx="1.6" fill="#fff"/><path d="M706.9 131.8l2.2 2.2 4-4" fill="none" stroke="#3498db" stroke-width="1.6"/><path d="M22.5 305.2v9.3h13" fill="none" stroke="#666" stroke-width="1"/><rect x="24.4" y="310.2" width="1.5" height="3.5" fill="#666"/><rect x="27.1" y="307.0" width="1.5" height="6.7" fill="#666"/><rect x="29.5" y="308.2" width="1.5" height="5.5" fill="#666"/><rect x="32.1" y="306.2" width="1.5" height="7.5" fill="#666"/><path d="M534.4 305.3v9.3h13" fill="none" stroke="#666" stroke-width="1"/><rect x="536.3" y="310.3" width="1.5" height="3.5" fill="#666"/><rect x="539.0" y="307.1" width="1.5" height="6.7" fill="#666"/><rect x="541.4" y="308.3" width="1.5" height="5.5" fill="#666"/><rect x="544.0" y="306.3" width="1.5" height="7.5" fill="#666"/><circle cx="30.9" cy="690.7" r="4.4" fill="none" stroke="#666" stroke-width="1.2"/><path d="M30.9 688v2.9h-2.2" fill="none" stroke="#666" stroke-width="1.1"/></svg>
</body></html>
